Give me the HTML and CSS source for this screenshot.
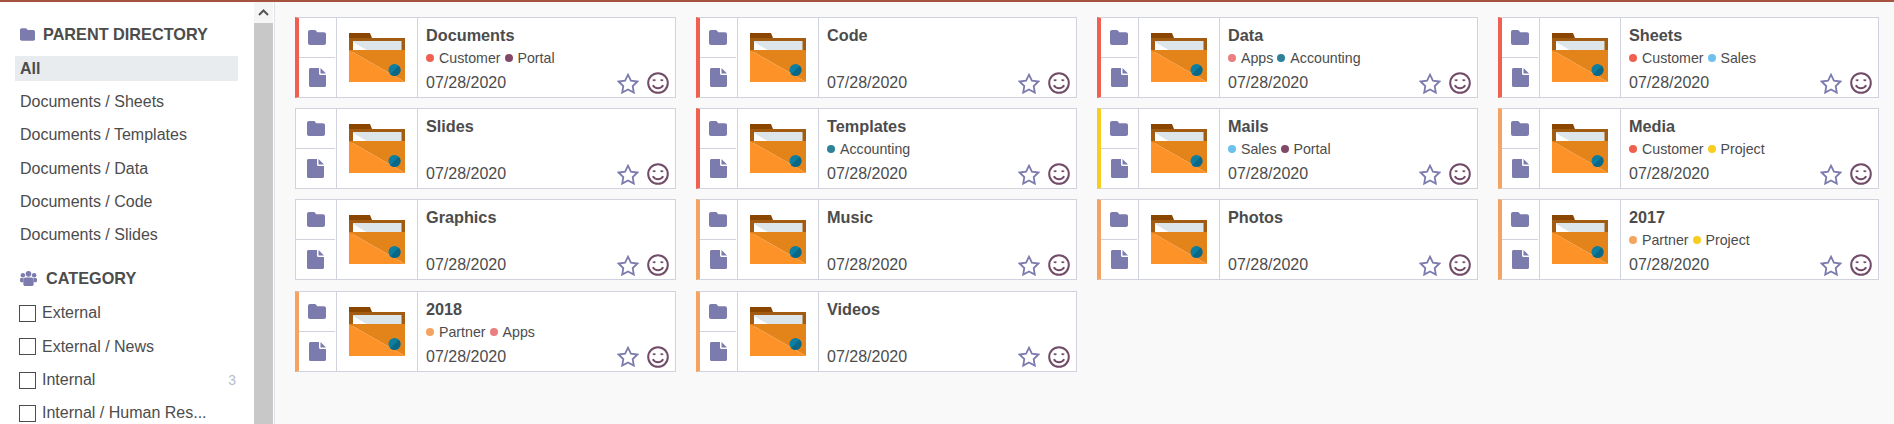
FILE: index.html
```html
<!DOCTYPE html>
<html lang="en">
<head>
    <meta charset="UTF-8">
    <meta name="viewport" content="width=device-width, initial-scale=1.0">
    <title>Documents</title>
    <link rel="stylesheet" href="styles.css">
</head>
<body>

    <!-- shared icons -->
    <svg class="defs" aria-hidden="true">
        <symbol id="i-folder" viewBox="0 0 18 15">
            <path d="M2 0h4.600c.7 0 1.300.3 1.700.9L9.200 2.200H16c1.100 0 2 .9 2 2V13c0 1.100-.9 2-2 2H2c-1.100 0-2-.9-2-2V2C0 .9.900 0 2 0z"/>
        </symbol>
        <symbol id="i-file" viewBox="0 0 17 19">
            <path d="M1.500 0H10v5.500c0 .8.700 1.500 1.500 1.500H17v10.500c0 .8-.7 1.500-1.500 1.500h-14C.7 19 0 18.300 0 17.500v-16C0 .7.700 0 1.500 0z"/>
            <path d="M11.500 0 17 5.500h-5.500z"/>
        </symbol>
        <symbol id="i-users" viewBox="0 0 18 16">
            <circle cx="3" cy="4.500" r="2.400"/>
            <circle cx="15" cy="4.500" r="2.400"/>
            <circle cx="9" cy="3" r="3"/>
            <path d="M0 8.500C0 7.600.8 7.500 1.500 7.500h2.200L3.500 12H1.500C.6 12 0 11.500 0 10.700z"/>
            <path d="M18 8.500c0-.9-.8-1-1.500-1h-2.200l.2 4.500h2c.9 0 1.500-.5 1.500-1.300z"/>
            <path d="M6 7h6c1.400 0 2.500 1.100 2.500 2.500V14c0 1.100-.9 2-2 2h-7c-1.100 0-2-.9-2-2V9.500C3.500 8.100 4.600 7 6 7z"/>
        </symbol>
        <symbol id="i-star" viewBox="0 0 22 21">
            <path d="M11 1.700l2.900 5.900 6.500.9-4.700 4.600 1.100 6.500-5.800-3.100-5.800 3.100 1.100-6.500L1.600 8.500l6.500-.9z"/>
        </symbol>
        <symbol id="i-smile" viewBox="0 0 22 22">
            <circle cx="11" cy="11" r="9.800"/>
            <path d="M5.800 13.200c1.300 2.100 3 3 5.200 3s3.900-.9 5.200-3"/>
            <path d="M6 8.700c.5-.7 1.700-.7 2.300 0M13.700 8.700c.5-.7 1.700-.7 2.300 0"/>
        </symbol>
        <symbol id="i-thumb" viewBox="0 0 56 49">
            <path fill="#8a4500" d="M0 0h21l2 5h33v14H0z"/>
            <path fill="#a25c12" d="M0 5h56v14H0z"/>
            <path fill="#dce6ea" d="M4 8h48.500v11H4z"/>
            <path fill="#fff" d="M4 9l17 10H4z"/>
            <path fill="#e2841a" d="M0 17h56v32z"/>
            <path fill="#fd9228" d="M0 17l56 32H0z"/>
            <circle cx="45.500" cy="37" r="6" fill="#0d7da0"/>
            <path fill="#0a6785" d="M41.300 41.300a6 6 0 0 0 8.500-8.500z"/>
        </symbol>
    </svg>

    <div class="app">
        <aside class="sidebar">
            <div class="filters">
                <div class="filter-head">
                    <svg class="head-icon"><use href="#i-folder"/></svg>
                    PARENT DIRECTORY
                </div>
                <div class="dir dir-active">All</div>
                <div class="dir">Documents / Sheets</div>
                <div class="dir">Documents / Templates</div>
                <div class="dir">Documents / Data</div>
                <div class="dir">Documents / Code</div>
                <div class="dir">Documents / Slides</div>

                <div class="filter-head cat-head">
                    <svg class="head-icon"><use href="#i-users"/></svg>
                    CATEGORY
                </div>
                <div class="check"><span class="box"></span><span class="label">External</span></div>
                <div class="check"><span class="box"></span><span class="label">External / News</span></div>
                <div class="check"><span class="box"></span><span class="label">Internal</span><span class="count">3</span></div>
                <div class="check"><span class="box"></span><span class="label">Internal / Human Res...</span></div>
            </div>
            <div class="scrollbar">
                <div class="scroll-btn">
                    <svg width="11" height="7" viewBox="0 0 11 7"><path d="M1 6l4.500-4.500L10 6"/></svg>
                </div>
            </div>
        </aside>

        <main class="kanban">

            <div class="card c-red">
                <div class="actions">
                    <div class="act"><svg class="i-folder"><use href="#i-folder"/></svg></div>
                    <div class="act"><svg class="i-file"><use href="#i-file"/></svg></div>
                </div>
                <div class="thumb"><svg><use href="#i-thumb"/></svg></div>
                <div class="details">
                    <div class="name">Documents</div>
                    <div class="tags"><span class="tag"><i class="dot d-red"></i>Customer</span><span class="tag"><i class="dot d-purple"></i>Portal</span></div>
                    <div class="foot"><span class="date">07/28/2020</span><svg class="star"><use href="#i-star"/></svg><svg class="smile"><use href="#i-smile"/></svg></div>
                </div>
            </div>

            <div class="card c-red">
                <div class="actions">
                    <div class="act"><svg class="i-folder"><use href="#i-folder"/></svg></div>
                    <div class="act"><svg class="i-file"><use href="#i-file"/></svg></div>
                </div>
                <div class="thumb"><svg><use href="#i-thumb"/></svg></div>
                <div class="details">
                    <div class="name">Code</div>
                    <div class="tags"></div>
                    <div class="foot"><span class="date">07/28/2020</span><svg class="star"><use href="#i-star"/></svg><svg class="smile"><use href="#i-smile"/></svg></div>
                </div>
            </div>

            <div class="card c-red">
                <div class="actions">
                    <div class="act"><svg class="i-folder"><use href="#i-folder"/></svg></div>
                    <div class="act"><svg class="i-file"><use href="#i-file"/></svg></div>
                </div>
                <div class="thumb"><svg><use href="#i-thumb"/></svg></div>
                <div class="details">
                    <div class="name">Data</div>
                    <div class="tags"><span class="tag"><i class="dot d-pink"></i>Apps</span><span class="tag"><i class="dot d-teal"></i>Accounting</span></div>
                    <div class="foot"><span class="date">07/28/2020</span><svg class="star"><use href="#i-star"/></svg><svg class="smile"><use href="#i-smile"/></svg></div>
                </div>
            </div>

            <div class="card c-red">
                <div class="actions">
                    <div class="act"><svg class="i-folder"><use href="#i-folder"/></svg></div>
                    <div class="act"><svg class="i-file"><use href="#i-file"/></svg></div>
                </div>
                <div class="thumb"><svg><use href="#i-thumb"/></svg></div>
                <div class="details">
                    <div class="name">Sheets</div>
                    <div class="tags"><span class="tag"><i class="dot d-red"></i>Customer</span><span class="tag"><i class="dot d-blue"></i>Sales</span></div>
                    <div class="foot"><span class="date">07/28/2020</span><svg class="star"><use href="#i-star"/></svg><svg class="smile"><use href="#i-smile"/></svg></div>
                </div>
            </div>

            <div class="card">
                <div class="actions">
                    <div class="act"><svg class="i-folder"><use href="#i-folder"/></svg></div>
                    <div class="act"><svg class="i-file"><use href="#i-file"/></svg></div>
                </div>
                <div class="thumb"><svg><use href="#i-thumb"/></svg></div>
                <div class="details">
                    <div class="name">Slides</div>
                    <div class="tags"></div>
                    <div class="foot"><span class="date">07/28/2020</span><svg class="star"><use href="#i-star"/></svg><svg class="smile"><use href="#i-smile"/></svg></div>
                </div>
            </div>

            <div class="card c-red">
                <div class="actions">
                    <div class="act"><svg class="i-folder"><use href="#i-folder"/></svg></div>
                    <div class="act"><svg class="i-file"><use href="#i-file"/></svg></div>
                </div>
                <div class="thumb"><svg><use href="#i-thumb"/></svg></div>
                <div class="details">
                    <div class="name">Templates</div>
                    <div class="tags"><span class="tag"><i class="dot d-teal"></i>Accounting</span></div>
                    <div class="foot"><span class="date">07/28/2020</span><svg class="star"><use href="#i-star"/></svg><svg class="smile"><use href="#i-smile"/></svg></div>
                </div>
            </div>

            <div class="card c-yellow">
                <div class="actions">
                    <div class="act"><svg class="i-folder"><use href="#i-folder"/></svg></div>
                    <div class="act"><svg class="i-file"><use href="#i-file"/></svg></div>
                </div>
                <div class="thumb"><svg><use href="#i-thumb"/></svg></div>
                <div class="details">
                    <div class="name">Mails</div>
                    <div class="tags"><span class="tag"><i class="dot d-blue"></i>Sales</span><span class="tag"><i class="dot d-purple"></i>Portal</span></div>
                    <div class="foot"><span class="date">07/28/2020</span><svg class="star"><use href="#i-star"/></svg><svg class="smile"><use href="#i-smile"/></svg></div>
                </div>
            </div>

            <div class="card c-orange">
                <div class="actions">
                    <div class="act"><svg class="i-folder"><use href="#i-folder"/></svg></div>
                    <div class="act"><svg class="i-file"><use href="#i-file"/></svg></div>
                </div>
                <div class="thumb"><svg><use href="#i-thumb"/></svg></div>
                <div class="details">
                    <div class="name">Media</div>
                    <div class="tags"><span class="tag"><i class="dot d-red"></i>Customer</span><span class="tag"><i class="dot d-yellow"></i>Project</span></div>
                    <div class="foot"><span class="date">07/28/2020</span><svg class="star"><use href="#i-star"/></svg><svg class="smile"><use href="#i-smile"/></svg></div>
                </div>
            </div>

            <div class="card">
                <div class="actions">
                    <div class="act"><svg class="i-folder"><use href="#i-folder"/></svg></div>
                    <div class="act"><svg class="i-file"><use href="#i-file"/></svg></div>
                </div>
                <div class="thumb"><svg><use href="#i-thumb"/></svg></div>
                <div class="details">
                    <div class="name">Graphics</div>
                    <div class="tags"></div>
                    <div class="foot"><span class="date">07/28/2020</span><svg class="star"><use href="#i-star"/></svg><svg class="smile"><use href="#i-smile"/></svg></div>
                </div>
            </div>

            <div class="card c-orange">
                <div class="actions">
                    <div class="act"><svg class="i-folder"><use href="#i-folder"/></svg></div>
                    <div class="act"><svg class="i-file"><use href="#i-file"/></svg></div>
                </div>
                <div class="thumb"><svg><use href="#i-thumb"/></svg></div>
                <div class="details">
                    <div class="name">Music</div>
                    <div class="tags"></div>
                    <div class="foot"><span class="date">07/28/2020</span><svg class="star"><use href="#i-star"/></svg><svg class="smile"><use href="#i-smile"/></svg></div>
                </div>
            </div>

            <div class="card c-orange">
                <div class="actions">
                    <div class="act"><svg class="i-folder"><use href="#i-folder"/></svg></div>
                    <div class="act"><svg class="i-file"><use href="#i-file"/></svg></div>
                </div>
                <div class="thumb"><svg><use href="#i-thumb"/></svg></div>
                <div class="details">
                    <div class="name">Photos</div>
                    <div class="tags"></div>
                    <div class="foot"><span class="date">07/28/2020</span><svg class="star"><use href="#i-star"/></svg><svg class="smile"><use href="#i-smile"/></svg></div>
                </div>
            </div>

            <div class="card c-orange">
                <div class="actions">
                    <div class="act"><svg class="i-folder"><use href="#i-folder"/></svg></div>
                    <div class="act"><svg class="i-file"><use href="#i-file"/></svg></div>
                </div>
                <div class="thumb"><svg><use href="#i-thumb"/></svg></div>
                <div class="details">
                    <div class="name">2017</div>
                    <div class="tags"><span class="tag"><i class="dot d-orange"></i>Partner</span><span class="tag"><i class="dot d-yellow"></i>Project</span></div>
                    <div class="foot"><span class="date">07/28/2020</span><svg class="star"><use href="#i-star"/></svg><svg class="smile"><use href="#i-smile"/></svg></div>
                </div>
            </div>

            <div class="card c-orange">
                <div class="actions">
                    <div class="act"><svg class="i-folder"><use href="#i-folder"/></svg></div>
                    <div class="act"><svg class="i-file"><use href="#i-file"/></svg></div>
                </div>
                <div class="thumb"><svg><use href="#i-thumb"/></svg></div>
                <div class="details">
                    <div class="name">2018</div>
                    <div class="tags"><span class="tag"><i class="dot d-orange"></i>Partner</span><span class="tag"><i class="dot d-pink"></i>Apps</span></div>
                    <div class="foot"><span class="date">07/28/2020</span><svg class="star"><use href="#i-star"/></svg><svg class="smile"><use href="#i-smile"/></svg></div>
                </div>
            </div>

            <div class="card c-orange">
                <div class="actions">
                    <div class="act"><svg class="i-folder"><use href="#i-folder"/></svg></div>
                    <div class="act"><svg class="i-file"><use href="#i-file"/></svg></div>
                </div>
                <div class="thumb"><svg><use href="#i-thumb"/></svg></div>
                <div class="details">
                    <div class="name">Videos</div>
                    <div class="tags"></div>
                    <div class="foot"><span class="date">07/28/2020</span><svg class="star"><use href="#i-star"/></svg><svg class="smile"><use href="#i-smile"/></svg></div>
                </div>
            </div>

        </main>
    </div>

</body>
</html>
```

FILE: styles.css
```css
html, body {
    height: 100%;
}

body {
    margin: 0;
    overflow: hidden;
    background-color: #f9f9f9;
    color: #4c4c4c;
    font-family: "Liberation Sans", Arial, sans-serif;
    border-top: 2px solid #a5533f;
    box-sizing: border-box;
}

.defs {
    display: none;
}

.app {
    display: flex;
    height: 100%;
}

/* left panel */
.sidebar {
    display: flex;
    flex: 0 0 275px;
    box-sizing: border-box;
    background-color: #fff;
    border-right: 1px solid #dee2e6;
    overflow: hidden;
}

.filters {
    flex: 0 0 254px;
    box-sizing: border-box;
    padding: 19px 16px 0 15px;
    font-size: 16px;
}

.filter-head {
    display: flex;
    align-items: center;
    height: 26px;
    padding-left: 5px;
    font-size: 16.25px;
    font-weight: bold;
    margin-bottom: 9px;
}

.head-icon {
    width: 15px;
    height: 13px;
    margin-right: 8px;
    fill: #7c7bad;
}

.cat-head {
    margin: 19px 0 9px;
}

.cat-head .head-icon {
    width: 17px;
    height: 15px;
    margin-right: 9px;
}

.dir {
    height: 25px;
    line-height: 25px;
    padding-left: 5px;
    margin-bottom: 8.2px;
}

.dir-active {
    background-color: #e9ecef;
    font-weight: bold;
}

.check {
    display: flex;
    align-items: center;
    height: 25px;
    margin-bottom: 8.3px;
    padding-left: 4px;
}

.box {
    flex: 0 0 auto;
    box-sizing: border-box;
    width: 17px;
    height: 17px;
    border: 1px solid #4c4c4c;
    margin-right: 6px;
}

.label {
    flex: 1;
    white-space: nowrap;
}

.count {
    color: #b8bcd0;
    font-size: 14px;
    padding-right: 2px;
}

.scrollbar {
    flex: 0 0 19px;
    background-color: #c8c8c8;
}

.scroll-btn {
    display: flex;
    align-items: center;
    justify-content: center;
    height: 21px;
    background-color: #f5f5f5;
}

.scroll-btn path {
    fill: none;
    stroke: #555;
    stroke-width: 2;
}

/* kanban cards */
.kanban {
    flex: 1;
    display: grid;
    grid-template-columns: repeat(4, 381px);
    grid-auto-rows: 81px;
    column-gap: 20px;
    row-gap: 10.2px;
    align-content: start;
    padding: 15px 0 0 20px;
}

.card {
    display: flex;
    box-sizing: border-box;
    background-color: #fff;
    border: 1px solid #d0d3de;
}

.c-red { border-left: 4px solid #f06050; }
.c-yellow { border-left: 4px solid #f7cd1f; }
.c-orange { border-left: 4px solid #f4a460; }

.actions {
    display: flex;
    flex-direction: column;
    flex: 0 0 38px;
    box-sizing: border-box;
    border-right: 1px solid #d0d3de;
}

.card:not(.c-red):not(.c-yellow):not(.c-orange) .actions {
    flex-basis: 41px;
}

.act {
    flex: 1;
    display: flex;
    align-items: center;
    justify-content: center;
    margin-right: 1px;
    fill: #7c7bad;
}

.act:first-child {
    border-bottom: 1px solid #d0d3de;
}

.i-folder {
    width: 18px;
    height: 15px;
}

.i-file {
    width: 17px;
    height: 19px;
}

.thumb {
    display: flex;
    justify-content: center;
    align-items: center;
    flex: 0 0 81px;
    box-sizing: border-box;
    border-right: 1px solid #d0d3de;
}

.thumb svg {
    width: 56px;
    height: 49px;
}

.details {
    flex: 1;
    display: flex;
    flex-direction: column;
    padding: 6px 6px 0 8px;
    min-width: 0;
}

.name {
    height: 23px;
    line-height: 22px;
    font-size: 16.25px;
    font-weight: bold;
}

.tags {
    display: flex;
    height: 22px;
    align-items: center;
    font-size: 14.2px;
}

.tag {
    display: flex;
    align-items: center;
    margin-right: 4px;
}

.dot {
    width: 8px;
    height: 8px;
    border-radius: 50%;
    margin-right: 5px;
}

.d-red { background-color: #f06050; }
.d-purple { background-color: #814968; }
.d-pink { background-color: #eb7e7f; }
.d-teal { background-color: #2c8397; }
.d-blue { background-color: #6cc1ed; }
.d-yellow { background-color: #f7cd1f; }
.d-orange { background-color: #f4a460; }

.foot {
    display: flex;
    align-items: center;
    margin-top: 3px;
}

.date {
    flex: 1;
    font-size: 16px;
}

.star {
    width: 22px;
    height: 21px;
    fill: none;
    stroke: #7c7bad;
    stroke-width: 1.8;
    margin-right: 8px;
}

.smile {
    width: 22px;
    height: 22px;
    fill: none;
    stroke: #714b67;
    stroke-width: 2;
}
```
